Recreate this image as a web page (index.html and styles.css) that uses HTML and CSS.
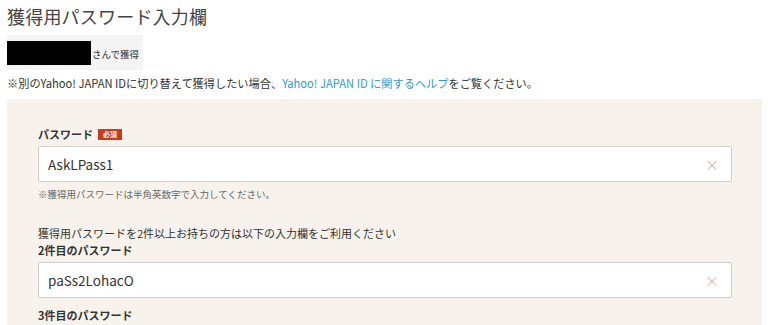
FILE: index.html
```html
<!DOCTYPE html>
<html lang="ja">
<head>
<meta charset="utf-8">
<link rel="stylesheet" href="styles.css">
</head>
<body>
<div class="page">
  <h1 class="title">獲得用パスワード入力欄</h1>
  <div class="acquirer"><span class="redact"></span><span class="acq-text">さんで獲得</span></div>
  <p class="note">※別のYahoo! JAPAN IDに切り替えて獲得したい場合、<a class="link" href="#">Yahoo! JAPAN ID に関するヘルプ</a>をご覧ください。</p>
  <div class="panel">
    <div class="label-row"><span class="label">パスワード</span><span class="badge">必須</span></div>
    <div class="field"><span class="value">AskLPass1</span><span class="clear">×</span></div>
    <p class="hint">※獲得用パスワードは半角英数字で入力してください。</p>
    <p class="lead">獲得用パスワードを2件以上お持ちの方は以下の入力欄をご利用ください</p>
    <div class="label-row"><span class="label">2件目のパスワード</span></div>
    <div class="field"><span class="value">paSs2LohacO</span><span class="clear">×</span></div>
    <div class="label-row third"><span class="label">3件目のパスワード</span></div>
  </div>
</div>
</body>
</html>
```
FILE: styles.css
```css
html, body {
  margin: 0;
  padding: 0;
  background: #ffffff;
}
body {
  font-family: "Noto Sans CJK JP", "Noto Sans", sans-serif;
  color: #333333;
  overflow: hidden;
  height: 325px;
}
.page {
  padding: 0 6px 0 7px;
}
.title {
  margin: 0;
  padding-top: 4px;
  font-size: 18px;
  font-weight: 400;
  line-height: 24px;
  color: #444444;
  letter-spacing: 0.2px;
}
.acquirer {
  display: inline-flex;
  align-items: center;
  background: #f4f4f4;
  margin-top: 7px;
  height: 35px;
  width: 136px;
}
.redact {
  display: block;
  width: 84px;
  height: 24px;
  background: #000000;
}
.acq-text {
  font-size: 9.5px;
  line-height: 12px;
  color: #333333;
  margin-left: 1px;
  margin-top: 3px;
}
.note {
  margin: 5px 0 0 0;
  font-size: 11.2px;
  line-height: 16px;
  color: #333333;
}
.link {
  color: #2d9ad0;
  text-decoration: none;
}
.panel {
  margin-top: 8px;
  background: #f7f3ec;
  padding: 26px 30px 20px 31px;
}
.label-row {
  display: flex;
  align-items: center;
  height: 18px;
}
.label {
  font-size: 11px;
  font-weight: 700;
  line-height: 18px;
  color: #333333;
}
.badge {
  margin-left: 5px;
  background: #cc3a1e;
  color: #ffffff;
  font-size: 7px;
  font-weight: 700;
  line-height: 11px;
  height: 11px;
  padding: 0 5px;
}
.field {
  margin-top: 3px;
  height: 34px;
  background: #ffffff;
  border: 1px solid #cfcfcf;
  border-radius: 2px;
  display: flex;
  align-items: center;
  justify-content: space-between;
  padding: 0 12px 0 9px;
}
.value {
  font-size: 13.5px;
  color: #333333;
  line-height: 20px;
}
.clear {
  font-size: 14px;
  font-weight: 300;
  color: #b0b0b0;
  line-height: 20px;
}
.hint {
  margin: 5px 0 0 0;
  font-size: 9.5px;
  line-height: 14px;
  color: #666666;
}
.lead {
  margin: 24px 0 0 0;
  font-size: 11px;
  line-height: 16px;
  color: #333333;
}
.third {
  margin-top: 8px;
}
```
